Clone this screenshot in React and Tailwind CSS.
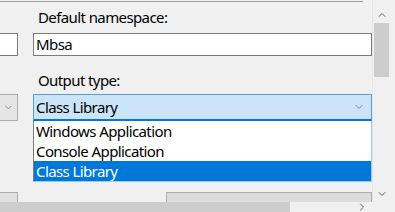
import { ChevronDown, ChevronUp, ChevronRight } from 'lucide-react';

const font = { fontFamily: '"Noto Sans", "Open Sans", sans-serif' };

const options = ['Windows Application', 'Console Application', 'Class Library'];

export default function App() {
    const selected = 'Class Library';

    return (
        <div className="relative w-[395px] h-[212px] overflow-hidden bg-[#f0f0f0] text-[15px] tracking-[-0.6px] text-black" style={font}>
            <div className="flex h-[202px]">
                {/* Main property panel */}
                <div className="w-[372px] flex flex-col">
                    <div className="h-px mt-px w-[363px] bg-[#a0a0a0]" />
                    <div className="h-[31px] pl-[38px] flex items-center leading-none">Default namespace:</div>

                    <div className="flex gap-[15px] h-[23px]">
                        <div className="w-[18px] bg-white border border-l-0 border-[#7a7a7a]" />
                        <div className="flex-1 bg-white border border-[#7a7a7a] pl-[2px] flex items-center leading-none">Mbsa</div>
                    </div>

                    <div className="h-[38px] pl-[38px] pt-[10px] flex items-center leading-none">Output type:</div>

                    <div className="flex gap-[15px] h-[27px]">
                        <div className="w-[18px] bg-[#e5e5e5] border border-l-0 border-[#adadad] flex items-center justify-center">
                            <ChevronDown size={11} strokeWidth={1.5} className="text-[#606060]" />
                        </div>
                        <div className="flex-1 bg-[#cce4f7] border border-b-2 border-[#569de5] border-b-[#0078d7] pl-[2px] pr-[6px] flex items-center justify-between leading-none">
                            <span>{selected}</span>
                            <ChevronDown size={12} strokeWidth={1.5} className="text-[#606060]" />
                        </div>
                    </div>

                    <div className="flex-1 flex gap-[15px] items-end">
                        <div className="w-[18px] h-[10px] bg-[#e1e1e1] border border-l-0 border-b-0 border-[#adadad]" />
                        <div className="flex-1" />
                        <div className="w-[206px] h-[10px] bg-[#dcdcdc] border border-b-0 border-[#adadad]" />
                    </div>
                </div>

                {/* Vertical scrollbar */}
                <div className="w-[18px] flex flex-col items-center border-l border-[#e6e6e6]">
                    <div className="h-[23px] flex items-center justify-center pt-[6px]">
                        <ChevronUp size={12} strokeWidth={2} className="text-[#606060]" />
                    </div>
                    <div className="w-[15px] h-[54px] bg-[#cdcdcd]" />
                    <div className="flex-1 flex items-end pb-[2px]">
                        <ChevronDown size={12} strokeWidth={2} className="text-[#606060]" />
                    </div>
                </div>
            </div>

            {/* Horizontal scrollbar */}
            <div className="flex h-[10px]">
                <div className="w-[290px] bg-[#cdcdcd]" />
                <div className="w-[82px] flex items-center justify-end pr-[4px]">
                    <ChevronRight size={12} strokeWidth={2} className="text-[#606060]" />
                </div>
            </div>

            {/* Open dropdown list */}
            <div className="absolute left-[33px] top-[121px] w-[339px] bg-white border border-t-0 border-l-[#7a7a7a] border-r-[#99c9ef] border-b-[#99c9ef]">
                {options.map((o) => (
                    <div
                        key={o}
                        className={`h-[20px] pl-[2px] flex items-center leading-none ${o === selected ? 'bg-[#0078d7] text-white' : ''}`}
                    >
                        {o}
                    </div>
                ))}
            </div>
        </div>
    );
}
